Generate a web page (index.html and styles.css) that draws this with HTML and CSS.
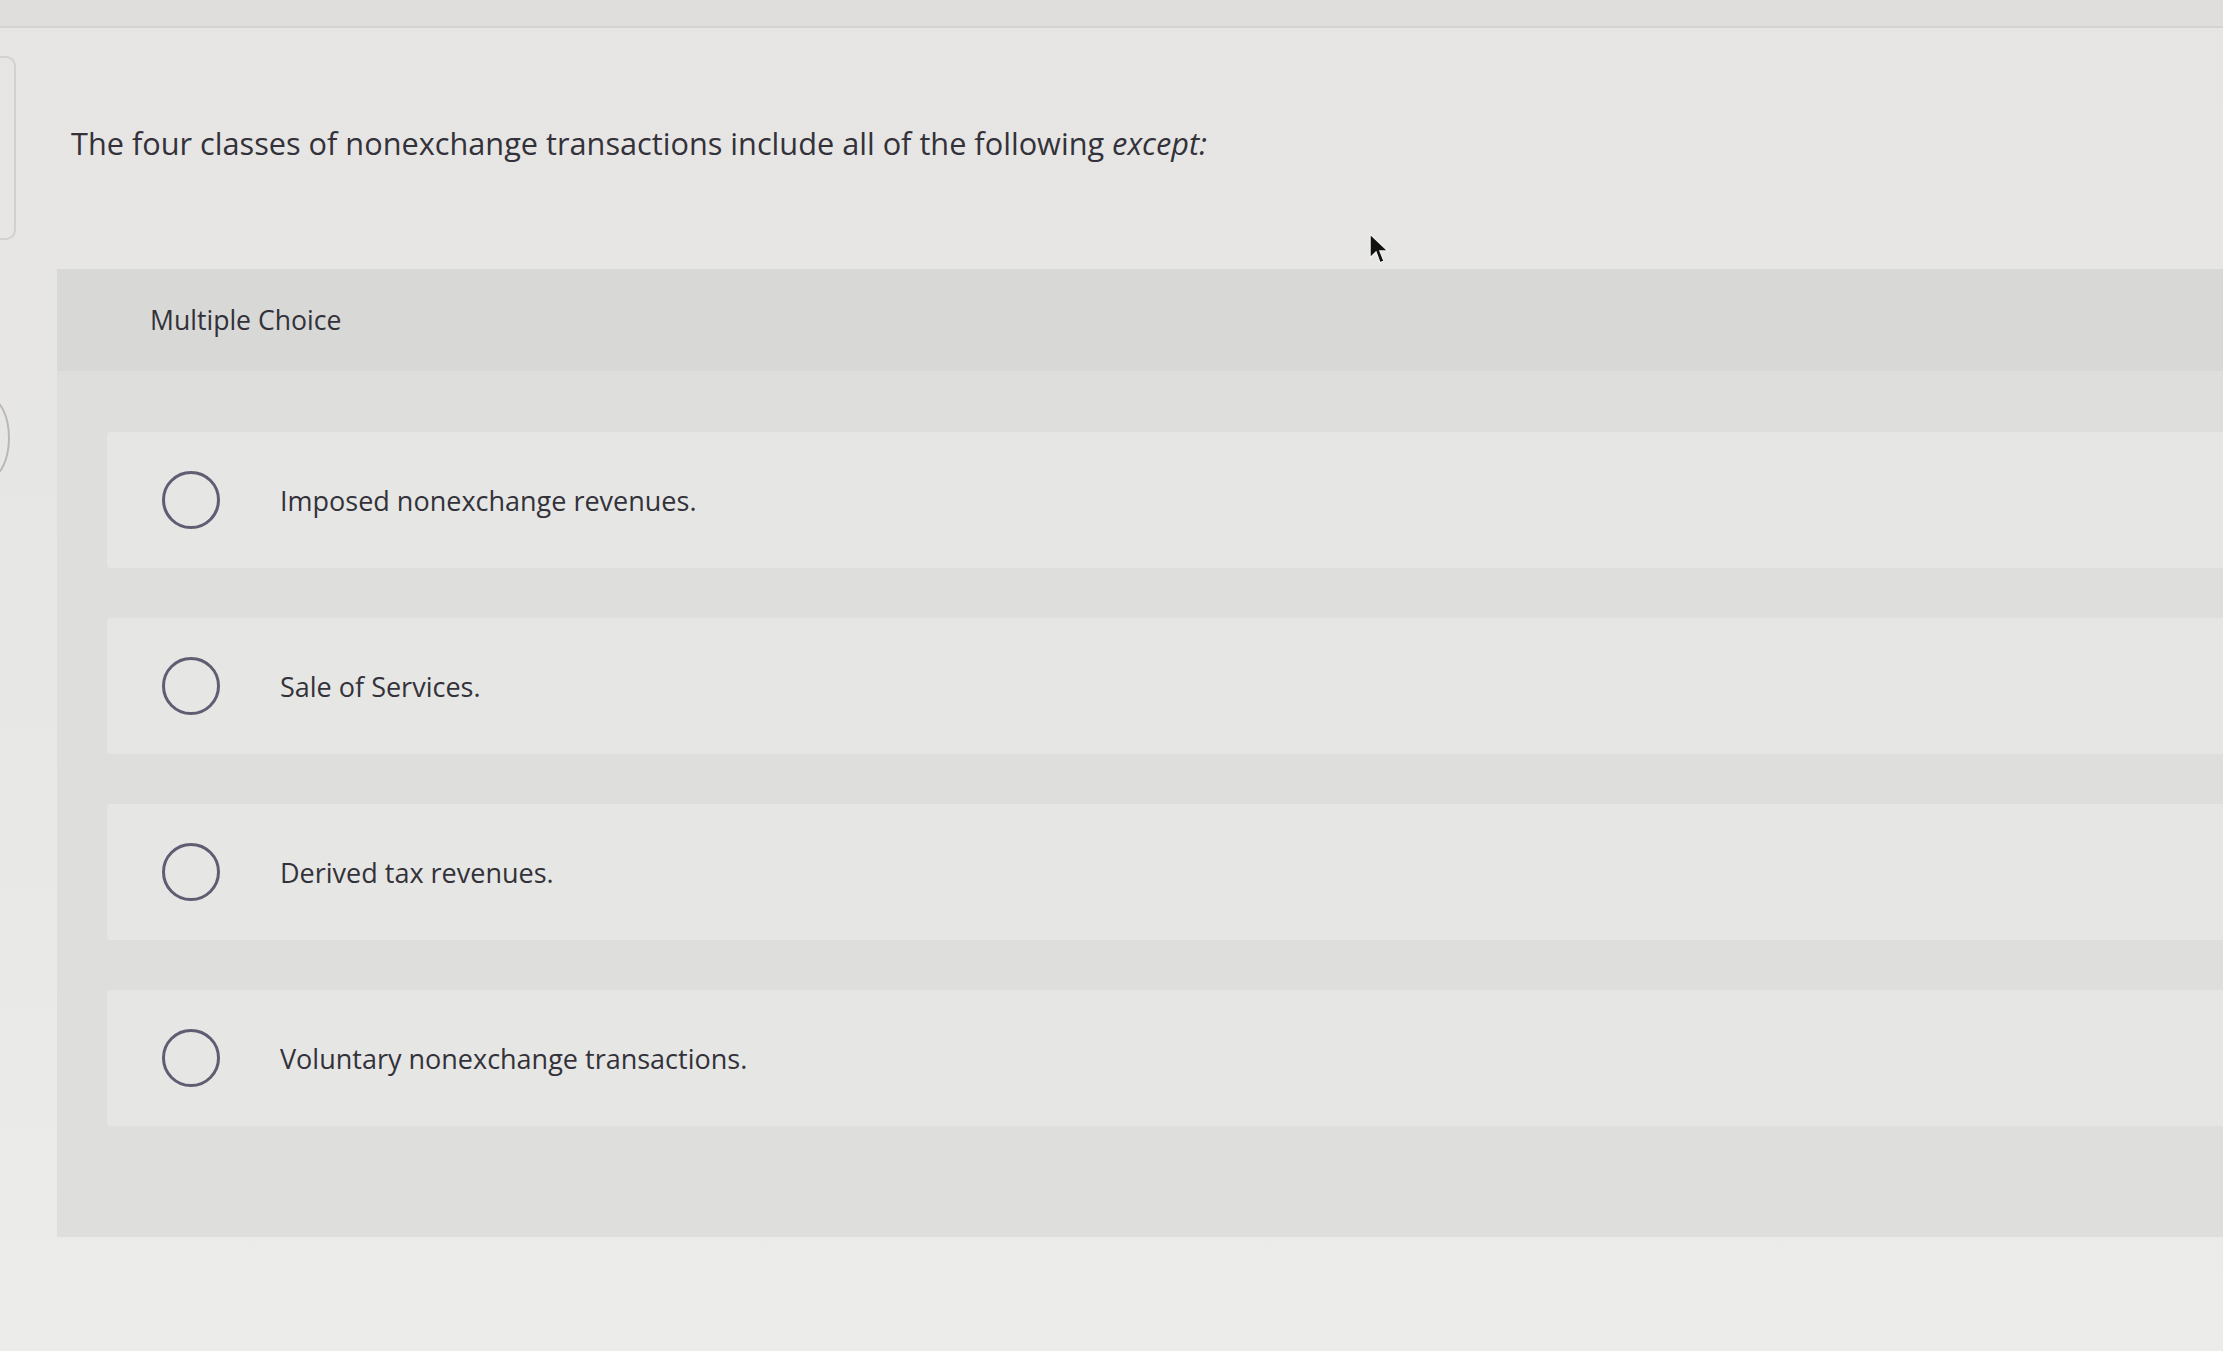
FILE: index.html
```html
<!DOCTYPE html>
<html lang="en">
<head>
<meta charset="utf-8">
<title>Multiple Choice</title>
<link rel="stylesheet" href="styles.css">
</head>
<body>
<div class="topbar"></div>
<main class="page">
  <div class="side-edge"></div>
  <div class="side-edge-2"></div>
  <p class="question">The four classes of nonexchange transactions include all of the following <em>except:</em></p>
  <section class="panel">
    <header class="panel-head">Multiple Choice</header>
    <div class="options">
      <label class="option"><span class="radio"></span><span class="opt-text">Imposed nonexchange revenues.</span></label>
      <label class="option"><span class="radio"></span><span class="opt-text">Sale of Services.</span></label>
      <label class="option"><span class="radio"></span><span class="opt-text">Derived tax revenues.</span></label>
      <label class="option"><span class="radio"></span><span class="opt-text">Voluntary nonexchange transactions.</span></label>
    </div>
  </section>
  <svg class="cursor" width="22" height="34" viewBox="0 0 22 34"><path d="M2 2 L2 26 L8 20 L12 31 L16 29 L12 19 L20 19 Z" fill="#111" stroke="#eee" stroke-width="1.5"/></svg>
</main>
</body>
</html>
```
FILE: styles.css
```css
html, body {
  margin: 0;
  padding: 0;
}
body {
  background: linear-gradient(180deg, #e6e5e3 0%, #e8e8e6 60%, #ececea 100%);
  font-family: "Open Sans", Lato, "Liberation Sans", sans-serif;
  color: #33323a;
  width: 2223px;
  height: 1351px;
  overflow: hidden;
}
.topbar {
  height: 26px;
  background: #dfdedc;
  border-bottom: 2px solid #d4d3d1;
}
.page {
  position: relative;
  display: flow-root;
}
.side-edge {
  position: absolute;
  left: -14px;
  top: 28px;
  width: 26px;
  height: 180px;
  border: 2px solid #d2d1cf;
  border-radius: 10px;
}
.side-edge-2 {
  position: absolute;
  left: -30px;
  top: 370px;
  width: 36px;
  height: 76px;
  border: 2px solid #b9b8b6;
  border-radius: 50%;
}
.question {
  margin: 95px 0 0 71px;
  font-size: 30.7px;
  line-height: 40px;
}
.question em {
  font-style: italic;
}
.panel {
  margin: 106px 0 0 57px;
  background: #dededc;
}
.panel-head {
  height: 102px;
  display: flex;
  align-items: center;
  padding-left: 93px;
  background: #d8d8d6;
  font-size: 26.6px;
}
.options {
  display: flex;
  flex-direction: column;
  gap: 50px;
  padding: 61px 0 111px 50px;
}
.option {
  height: 136px;
  display: flex;
  align-items: center;
  padding-left: 55px;
  background: #e6e6e4;
  border-radius: 4px 0 0 4px;
}
.radio {
  width: 52px;
  height: 52px;
  border: 3px solid #5f5d72;
  border-radius: 50%;
  flex: none;
}
.opt-text {
  margin-left: 60px;
  font-size: 27px;
}
.cursor {
  position: absolute;
  left: 1368px;
  top: 204px;
}
```
